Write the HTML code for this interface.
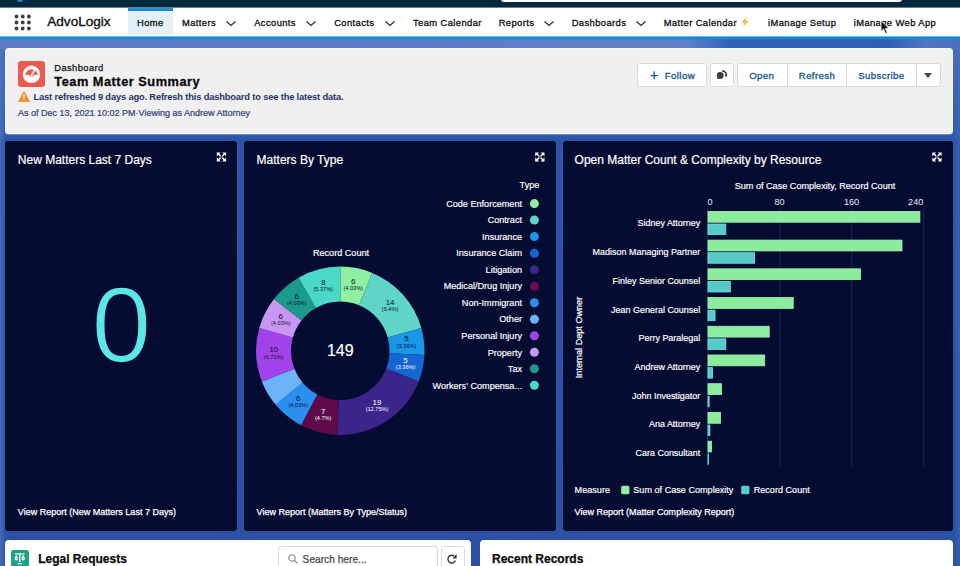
<!DOCTYPE html>
<html><head><meta charset="utf-8"><title>Team Matter Summary</title>
<style>
*{box-sizing:border-box;margin:0;padding:0}
html,body{width:960px;height:566px;overflow:hidden}
body{font-family:"Liberation Sans",Arial,sans-serif;background:#2c54a7;position:relative;color:#111}
.abs{position:absolute}
#bg{left:0;top:0;width:960px;height:566px;background:linear-gradient(90deg,rgba(90,125,200,0.55) 0,rgba(60,100,180,0) 6px,rgba(60,100,180,0) 953px,rgba(80,115,190,0.35) 960px),linear-gradient(180deg,#456cba 48px,#3059ad 134px,#2d55a8 140px,#2a51a4 566px)}
#top{left:0;top:0;width:960px;height:7.6px;background:#04283e}
#srch{left:501px;top:-6px;width:401px;height:8px;background:#fff;border-radius:3px}
#nav{left:0;top:0;width:960px;height:41px;background:linear-gradient(180deg,#04283e 0,#04283e 7.1px,#fff 8.1px,#fff 36px,#1689d3 36.8px,#1689d3 38.9px,rgba(40,120,200,0) 39.8px)}
.ni{position:absolute;top:17.4px;font-size:9.4px;letter-spacing:0.4px;line-height:12px;color:#111;white-space:nowrap;-webkit-text-stroke:0.3px #111}
.chev{position:absolute;top:20.5px;width:10px;height:5px}
#home{left:128px;top:8px;width:45px;height:27px;background:linear-gradient(180deg,rgba(22,137,211,0.6) 0,#1689d3 0.6px,#1689d3 2.6px,#e3f0f9 3.4px,#e3f0f9 26.3px,rgba(227,240,249,0) 26.9px)}
#hdr{left:5.4px;top:48px;width:947.7px;height:86px;background:#f0f0f0;border:1.5px solid #fbf8f2;border-radius:3.5px;box-shadow:0 0.6px 0 rgba(251,248,242,0.6)}
.btn{position:absolute;top:63px;height:23.5px;background:#fff;border:1px solid #ddd8d8;border-radius:3px;font-size:9.5px;letter-spacing:0.4px;color:#15538a;-webkit-text-stroke:0.3px #15538a;line-height:22px;text-align:center}
.bt{position:absolute;top:69.6px;font-size:9.6px;letter-spacing:0.4px;line-height:12px;color:#15538a;-webkit-text-stroke:0.3px #15538a;white-space:nowrap}
.panel{position:absolute;top:140.5px;height:390.5px;background:#050c31;border-radius:4px;box-shadow:inset 0 0 0 1px #040926}
.pt{position:absolute;top:153.2px;font-size:12px;line-height:15px;color:#fff;white-space:nowrap;-webkit-text-stroke:0.2px #fff}
.vr{position:absolute;top:506px;font-size:9.03px;line-height:12px;color:#fff;white-space:nowrap;-webkit-text-stroke:0.25px #fff}
.card{position:absolute;top:540.3px;height:30px;background:#fff;border-radius:4px}
svg{position:absolute;left:0;top:0;overflow:visible}
svg text{font-family:"Liberation Sans",Arial,sans-serif}
svg text[fill="#fff"]{stroke:#fff;stroke-width:0.18px}
</style></head><body>
<div id="bg" class="abs"></div>
<div class="abs" style="left:0;top:39px;width:960px;height:10px;background:linear-gradient(90deg,#5a7dc5 0,#5c7fc6 690px,#3261b6 730px,#3060b5 890px,#5076c0 925px,#4a70bc 960px)"></div>
<div id="nav" class="abs"></div>
<div id="srch" class="abs"></div>
<div class="abs" style="left:17px;top:-3px;width:6px;height:4.5px;border-radius:3px;background:#1c8fdc"></div>
<div id="home" class="abs"></div>
<svg class="abs" style="left:14px;top:14px" width="18" height="18" viewBox="0 0 18 18"><g fill="#3e3e3c">
<circle cx="2.5" cy="2.5" r="1.9"/><circle cx="8.7" cy="2.5" r="1.9"/><circle cx="14.9" cy="2.5" r="1.9"/>
<circle cx="2.5" cy="8.5" r="1.9"/><circle cx="8.7" cy="8.5" r="1.9"/><circle cx="14.9" cy="8.5" r="1.9"/>
<circle cx="2.5" cy="14.5" r="1.9"/><circle cx="8.7" cy="14.5" r="1.9"/><circle cx="14.9" cy="14.5" r="1.9"/></g></svg>
<div class="abs" style="left:47.3px;top:13px;font-size:13.55px;line-height:18px;color:#111;white-space:nowrap;-webkit-text-stroke:0.35px #111">AdvoLogix</div>
<div class="ni" style="left:137px">Home</div>
<div class="ni" style="left:182px">Matters</div>
<div class="ni" style="left:254.2px">Accounts</div>
<div class="ni" style="left:334.2px">Contacts</div>
<div class="ni" style="left:413px">Team Calendar</div>
<div class="ni" style="left:498.7px">Reports</div>
<div class="ni" style="left:571.7px">Dashboards</div>
<div class="ni" style="left:663.7px">Matter Calendar</div>
<div class="ni" style="left:768px">iManage Setup</div>
<div class="ni" style="left:853.7px">iManage Web App</div>
<svg class="chev" style="left:226px" viewBox="0 0 10 5"><path d="M0.5 0.4L5 4.4L9.5 0.4" fill="none" stroke="#2e2e2d" stroke-width="1.3"/></svg>
<svg class="chev" style="left:306px" viewBox="0 0 10 5"><path d="M0.5 0.4L5 4.4L9.5 0.4" fill="none" stroke="#2e2e2d" stroke-width="1.3"/></svg>
<svg class="chev" style="left:385px" viewBox="0 0 10 5"><path d="M0.5 0.4L5 4.4L9.5 0.4" fill="none" stroke="#2e2e2d" stroke-width="1.3"/></svg>
<svg class="chev" style="left:543.7px" viewBox="0 0 10 5"><path d="M0.5 0.4L5 4.4L9.5 0.4" fill="none" stroke="#2e2e2d" stroke-width="1.3"/></svg>
<svg class="chev" style="left:636px" viewBox="0 0 10 5"><path d="M0.5 0.4L5 4.4L9.5 0.4" fill="none" stroke="#2e2e2d" stroke-width="1.3"/></svg>
<svg class="abs" style="left:740.8px;top:17.3px" width="8" height="9.8" viewBox="0 0 8 11" preserveAspectRatio="none"><path d="M5.6 0L0.4 6.2H3.6L2 11L7.8 4.4H4.4Z" fill="#f7b836"/></svg>
<!-- cursor -->
<svg class="abs" style="left:880px;top:20px" width="10" height="15" viewBox="0 0 10 15"><path d="M1 0.5V11.5L3.6 9L5.6 13.6L7.4 12.8L5.4 8.4H9Z" fill="#111" stroke="#fff" stroke-width="0.8"/></svg>

<div id="hdr" class="abs"></div>
<div class="abs" style="left:18px;top:60.5px;width:27px;height:26.5px;background:#ea5a50;border-radius:3px;box-shadow:0 0 0 1px #f7f4ef"></div>
<svg class="abs" style="left:18px;top:60.5px" width="27" height="26.5" viewBox="0 0 27 26.5"><circle cx="13.5" cy="13.3" r="8.7" fill="#fff"/><path d="M7.3 14.4A6.2 6.2 0 0 1 19.7 14.4C18 13.2 16.4 13.6 15.4 14.8C14.4 16.2 12.4 16.2 11.5 14.8C10.6 13.6 9 13.2 7.3 14.4Z" fill="#ea5a50"/><path d="M13.3 14.6L16.2 9.6" stroke="#fff" stroke-width="1.7" stroke-linecap="round"/></svg>
<div class="abs" style="left:54.3px;top:62.2px;font-size:9.4px;letter-spacing:0.38px;line-height:12px;color:#111;-webkit-text-stroke:0.25px #111;white-space:nowrap">Dashboard</div>
<div class="abs" style="left:54.3px;top:72.9px;font-size:12.8px;letter-spacing:0.5px;line-height:17px;font-weight:bold;color:#0a0a0a;-webkit-text-stroke:0.3px #0a0a0a;white-space:nowrap">Team Matter Summary</div>
<svg class="abs" style="left:18px;top:91px" width="12" height="11" viewBox="0 0 12 11"><path d="M6 0.6L11.5 10.4H0.5Z" fill="#f58a2c" stroke="#f58a2c" stroke-width="0.8" stroke-linejoin="round"/><rect x="5.4" y="3.6" width="1.2" height="3.6" fill="#fff"/><rect x="5.4" y="8" width="1.2" height="1.2" fill="#fff"/></svg>
<div class="abs" style="left:33.5px;top:91px;font-size:9.3px;letter-spacing:-0.15px;line-height:12px;font-weight:bold;color:#22346c;white-space:nowrap">Last refreshed 9 days ago. Refresh this dashboard to see the latest data.</div>
<div class="abs" style="left:18px;top:106.6px;font-size:9px;line-height:12px;color:#2f4077;-webkit-text-stroke:0.2px #2f4077;white-space:nowrap">As of Dec 13, 2021 10:02 PM·Viewing as Andrew Attorney</div>

<div class="btn" style="left:637px;width:70px"><span style="position:absolute;left:12px;top:-0.4px;font-size:14px;letter-spacing:0">+</span><span style="position:absolute;left:26.7px;top:0.6px;font-size:9.7px">Follow</span></div>
<div class="btn" style="left:710.3px;width:23.7px"></div>
<svg class="abs" style="left:716px;top:70px" width="12" height="10" viewBox="0 0 12 10"><circle cx="4.2" cy="5.4" r="3.4" fill="#3f3d3b"/><path d="M1 9L1.6 6.4L4 8.4Z" fill="#3f3d3b"/><path d="M6.2 1.0A3.7 3.7 0 0 1 9.7 6.6" fill="none" stroke="#2f2d2b" stroke-width="1.5"/></svg>
<div class="btn" style="left:737px;width:203.5px"></div>
<div class="abs" style="left:786.5px;top:64px;width:1px;height:21.5px;background:#dcd9d8"></div>
<div class="abs" style="left:846px;top:64px;width:1px;height:21.5px;background:#dcd9d8"></div>
<div class="abs" style="left:916px;top:64px;width:1px;height:21.5px;background:#dcd9d8"></div>
<div class="bt" style="left:749.2px">Open</div>
<div class="bt" style="left:798.8px">Refresh</div>
<div class="bt" style="left:858.3px">Subscribe</div>
<svg class="abs" style="left:924.3px;top:72.5px" width="8" height="5" viewBox="0 0 8 5"><path d="M0 0H8L4 5Z" fill="#4a4846"/></svg>

<div class="panel" style="left:5.2px;width:232.3px"></div>
<div class="panel" style="left:244px;width:311.5px"></div>
<div class="panel" style="left:562.5px;width:390px"></div>
<div class="pt" style="left:17.8px">New Matters Last 7 Days</div>
<div class="pt" style="left:256.6px">Matters By Type</div>
<div class="pt" style="left:574.6px">Open Matter Count &amp; Complexity by Resource</div>
<div class="vr" style="left:17.8px">View Report (New Matters Last 7 Days)</div>
<div class="vr" style="left:256.6px">View Report (Matters By Type/Status)</div>
<div class="vr" style="left:574.6px">View Report (Matter Complexity Report)</div>
<div class="abs" id="zero" style="left:61.5px;top:264.5px;width:120px;text-align:center;font-size:107.5px;line-height:120px;color:#5ce6e6;-webkit-text-stroke:1.6px #050c31">0</div>

<svg class="abs" width="960" height="566" viewBox="0 0 960 566">
<g transform="translate(216.8 152.4)"><path d="M0 0H3.9L0 3.9ZM9.3 0V3.9L5.4 0ZM0 9.1V5.2L3.9 9.1ZM9.3 9.1H5.4L9.3 5.2Z" fill="#fff"/><path d="M1.4 1.4L3.7 3.65M7.9 1.4L5.6 3.65M1.4 7.7L3.7 5.45M7.9 7.7L5.6 5.45" stroke="#fff" stroke-width="1.5"/><path d="M3.5 3.45L5.8 5.65M5.8 3.45L3.5 5.65" stroke="#fff" stroke-width="1.3" opacity="0.4"/></g>
<g transform="translate(535.2 152.4)"><path d="M0 0H3.9L0 3.9ZM9.3 0V3.9L5.4 0ZM0 9.1V5.2L3.9 9.1ZM9.3 9.1H5.4L9.3 5.2Z" fill="#fff"/><path d="M1.4 1.4L3.7 3.65M7.9 1.4L5.6 3.65M1.4 7.7L3.7 5.45M7.9 7.7L5.6 5.45" stroke="#fff" stroke-width="1.5"/><path d="M3.5 3.45L5.8 5.65M5.8 3.45L3.5 5.65" stroke="#fff" stroke-width="1.3" opacity="0.4"/></g>
<g transform="translate(932.3 152.4)"><path d="M0 0H3.9L0 3.9ZM9.3 0V3.9L5.4 0ZM0 9.1V5.2L3.9 9.1ZM9.3 9.1H5.4L9.3 5.2Z" fill="#fff"/><path d="M1.4 1.4L3.7 3.65M7.9 1.4L5.6 3.65M1.4 7.7L3.7 5.45M7.9 7.7L5.6 5.45" stroke="#fff" stroke-width="1.5"/><path d="M3.5 3.45L5.8 5.65M5.8 3.45L3.5 5.65" stroke="#fff" stroke-width="1.3" opacity="0.4"/></g>
<text x="539.3" y="188" text-anchor="end" font-size="9.1" fill="#fff">Type</text>
<text x="522" y="206.8" text-anchor="end" font-size="9.1" fill="#fff">Code Enforcement</text><circle cx="534.4" cy="203.6" r="4.5" fill="#8ff0a2"/>
<text x="522" y="223.3" text-anchor="end" font-size="9.1" fill="#fff">Contract</text><circle cx="534.4" cy="220.1" r="4.5" fill="#5fd5c5"/>
<text x="522" y="239.8" text-anchor="end" font-size="9.1" fill="#fff">Insurance</text><circle cx="534.4" cy="236.6" r="4.5" fill="#1b97e8"/>
<text x="522" y="256.4" text-anchor="end" font-size="9.1" fill="#fff">Insurance Claim</text><circle cx="534.4" cy="253.2" r="4.5" fill="#1565d3"/>
<text x="522" y="272.9" text-anchor="end" font-size="9.1" fill="#fff">Litigation</text><circle cx="534.4" cy="269.7" r="4.5" fill="#3b258b"/>
<text x="522" y="289.4" text-anchor="end" font-size="9.1" fill="#fff">Medical/Drug Injury</text><circle cx="534.4" cy="286.2" r="4.5" fill="#6a0c50"/>
<text x="522" y="305.9" text-anchor="end" font-size="9.1" fill="#fff">Non-Immigrant</text><circle cx="534.4" cy="302.7" r="4.5" fill="#2a8ff0"/>
<text x="522" y="322.4" text-anchor="end" font-size="9.1" fill="#fff">Other</text><circle cx="534.4" cy="319.2" r="4.5" fill="#6cb3f7"/>
<text x="522" y="339.0" text-anchor="end" font-size="9.1" fill="#fff">Personal Injury</text><circle cx="534.4" cy="335.8" r="4.5" fill="#a142ea"/>
<text x="522" y="355.5" text-anchor="end" font-size="9.1" fill="#fff">Property</text><circle cx="534.4" cy="352.3" r="4.5" fill="#c997f3"/>
<text x="522" y="372.0" text-anchor="end" font-size="9.1" fill="#fff">Tax</text><circle cx="534.4" cy="368.8" r="4.5" fill="#1b9b8b"/>
<text x="522" y="388.5" text-anchor="end" font-size="9.1" fill="#fff">Workers' Compensa...</text><circle cx="534.4" cy="385.3" r="4.5" fill="#4ad9c9"/>
<text x="341" y="256.2" text-anchor="middle" font-size="9.1" fill="#fff">Record Count</text>
<path d="M340.30 266.60A84.2 84.2 0 0 1 372.21 272.88L358.98 305.18A49.3 49.3 0 0 0 340.30 301.50Z" fill="#8ff0a2"/>
<text x="353.2" y="283.5" text-anchor="middle" font-size="8" fill="#0b1030">6</text>
<text x="353.2" y="290.0" text-anchor="middle" font-size="5.6" fill="#0b1030">(4.03%)</text>
<path d="M372.21 272.88A84.2 84.2 0 0 1 421.33 327.91L387.74 337.40A49.3 49.3 0 0 0 358.98 305.18Z" fill="#5fd5c5"/>
<text x="390.1" y="304.6" text-anchor="middle" font-size="8" fill="#0b1030">14</text>
<text x="390.1" y="311.1" text-anchor="middle" font-size="5.6" fill="#0b1030">(9.4%)</text>
<path d="M421.33 327.91A84.2 84.2 0 0 1 424.40 354.89L389.54 353.19A49.3 49.3 0 0 0 387.74 337.40Z" fill="#1b97e8"/>
<text x="406.6" y="341.4" text-anchor="middle" font-size="8" fill="#0b1030">5</text>
<text x="406.6" y="347.9" text-anchor="middle" font-size="5.6" fill="#0b1030">(3.36%)</text>
<path d="M424.40 354.89A84.2 84.2 0 0 1 418.73 381.44L386.22 368.74A49.3 49.3 0 0 0 389.54 353.19Z" fill="#1565d3"/>
<text x="405.6" y="362.9" text-anchor="middle" font-size="8" fill="#ffffff">5</text>
<text x="405.6" y="369.4" text-anchor="middle" font-size="5.6" fill="#ffffff">(3.36%)</text>
<path d="M418.73 381.44A84.2 84.2 0 0 1 337.57 434.96L338.70 400.07A49.3 49.3 0 0 0 386.22 368.74Z" fill="#3b258b"/>
<text x="377.0" y="404.7" text-anchor="middle" font-size="8" fill="#ffffff">19</text>
<text x="377.0" y="411.2" text-anchor="middle" font-size="5.6" fill="#ffffff">(12.75%)</text>
<path d="M337.57 434.96A84.2 84.2 0 0 1 300.98 425.26L317.28 394.40A49.3 49.3 0 0 0 338.70 400.07Z" fill="#5e0a4a"/>
<text x="323.2" y="413.5" text-anchor="middle" font-size="8" fill="#ffffff">7</text>
<text x="323.2" y="420.0" text-anchor="middle" font-size="5.6" fill="#ffffff">(4.7%)</text>
<path d="M300.98 425.26A84.2 84.2 0 0 1 275.70 404.81L302.48 382.42A49.3 49.3 0 0 0 317.28 394.40Z" fill="#2a8ff0"/>
<text x="298.3" y="400.9" text-anchor="middle" font-size="8" fill="#0b1030">6</text>
<text x="298.3" y="407.4" text-anchor="middle" font-size="5.6" fill="#0b1030">(4.03%)</text>
<path d="M275.70 404.81A84.2 84.2 0 0 1 261.87 381.44L294.38 368.74A49.3 49.3 0 0 0 302.48 382.42Z" fill="#6cb3f7"/>
<path d="M261.87 381.44A84.2 84.2 0 0 1 259.27 327.91L292.86 337.40A49.3 49.3 0 0 0 294.38 368.74Z" fill="#a142ea"/>
<text x="273.6" y="352.2" text-anchor="middle" font-size="8" fill="#0b1030">10</text>
<text x="273.6" y="358.7" text-anchor="middle" font-size="5.6" fill="#0b1030">(6.71%)</text>
<path d="M259.27 327.91A84.2 84.2 0 0 1 273.99 298.91L301.47 320.42A49.3 49.3 0 0 0 292.86 337.40Z" fill="#c997f3"/>
<text x="280.8" y="318.8" text-anchor="middle" font-size="8" fill="#0b1030">6</text>
<text x="280.8" y="325.3" text-anchor="middle" font-size="5.6" fill="#0b1030">(4.03%)</text>
<path d="M273.99 298.91A84.2 84.2 0 0 1 298.59 277.65L315.88 307.97A49.3 49.3 0 0 0 301.47 320.42Z" fill="#1b9b8b"/>
<text x="296.7" y="298.5" text-anchor="middle" font-size="8" fill="#0b1030">6</text>
<text x="296.7" y="305.0" text-anchor="middle" font-size="5.6" fill="#0b1030">(4.03%)</text>
<path d="M298.59 277.65A84.2 84.2 0 0 1 340.30 266.60L340.30 301.50A49.3 49.3 0 0 0 315.88 307.97Z" fill="#4ad9c9"/>
<text x="323.2" y="284.5" text-anchor="middle" font-size="8" fill="#0b1030">8</text>
<text x="323.2" y="291.0" text-anchor="middle" font-size="5.6" fill="#0b1030">(5.37%)</text>
<text x="340.3" y="356" text-anchor="middle" font-size="16" fill="#fff">149</text>

<text x="815" y="189.2" text-anchor="middle" font-size="9.1" fill="#fff">Sum of Case Complexity, Record Count</text>
<text x="707.5" y="205.2" font-size="9.1" fill="#e8ecf8">0</text>
<text x="779.5" y="205.2" text-anchor="middle" font-size="9.1" fill="#e8ecf8">80</text>
<text x="851.6" y="205.2" text-anchor="middle" font-size="9.1" fill="#e8ecf8">160</text>
<text x="923.3" y="205.2" text-anchor="end" font-size="9.1" fill="#e8ecf8">240</text>
<rect x="707.0" y="208" width="1" height="258.5" fill="#16275a"/>
<rect x="779.3" y="208" width="1" height="258.5" fill="#16275a"/>
<rect x="851.2" y="208" width="1" height="258.5" fill="#16275a"/>
<rect x="923.2" y="208" width="1" height="258.5" fill="#16275a"/>
<rect x="708.0" y="211.40" width="211.9" height="10.8" fill="#8aec9c" stroke="#a6f6b4" stroke-width="0.8"/>
<rect x="708.0" y="224.00" width="17.8" height="10.5" fill="#55cac6" stroke="#76eae4" stroke-width="0.8"/>
<text x="700.3" y="226.4" text-anchor="end" font-size="8.97" fill="#fff">Sidney Attorney</text>
<rect x="708.0" y="240.12" width="194.0" height="10.8" fill="#8aec9c" stroke="#a6f6b4" stroke-width="0.8"/>
<rect x="708.0" y="252.72" width="46.6" height="10.5" fill="#55cac6" stroke="#76eae4" stroke-width="0.8"/>
<text x="700.3" y="255.1" text-anchor="end" font-size="8.97" fill="#fff">Madison Managing Partner</text>
<rect x="708.0" y="268.84" width="152.5" height="10.8" fill="#8aec9c" stroke="#a6f6b4" stroke-width="0.8"/>
<rect x="708.0" y="281.44" width="22.3" height="10.5" fill="#55cac6" stroke="#76eae4" stroke-width="0.8"/>
<text x="700.3" y="283.8" text-anchor="end" font-size="8.97" fill="#fff">Finley Senior Counsel</text>
<rect x="708.0" y="297.56" width="85.2" height="10.8" fill="#8aec9c" stroke="#a6f6b4" stroke-width="0.8"/>
<rect x="708.0" y="310.16" width="7.0" height="10.5" fill="#55cac6" stroke="#76eae4" stroke-width="0.8"/>
<text x="700.3" y="312.6" text-anchor="end" font-size="8.97" fill="#fff">Jean General Counsel</text>
<rect x="708.0" y="326.28" width="61.2" height="10.8" fill="#8aec9c" stroke="#a6f6b4" stroke-width="0.8"/>
<rect x="708.0" y="338.88" width="17.8" height="10.5" fill="#55cac6" stroke="#76eae4" stroke-width="0.8"/>
<text x="700.3" y="341.3" text-anchor="end" font-size="8.97" fill="#fff">Perry Paralegal</text>
<rect x="708.0" y="355.00" width="56.7" height="10.8" fill="#8aec9c" stroke="#a6f6b4" stroke-width="0.8"/>
<rect x="708.0" y="367.60" width="4.5" height="10.5" fill="#55cac6" stroke="#76eae4" stroke-width="0.8"/>
<text x="700.3" y="370.0" text-anchor="end" font-size="8.97" fill="#fff">Andrew Attorney</text>
<rect x="708.0" y="383.72" width="13.5" height="10.8" fill="#8aec9c" stroke="#a6f6b4" stroke-width="0.8"/>
<rect x="708.0" y="396.32" width="1.1" height="10.5" fill="#55cac6" stroke="#76eae4" stroke-width="0.8"/>
<text x="700.3" y="398.7" text-anchor="end" font-size="8.97" fill="#fff">John Investigator</text>
<rect x="708.0" y="412.44" width="12.5" height="10.8" fill="#8aec9c" stroke="#a6f6b4" stroke-width="0.8"/>
<rect x="708.0" y="425.04" width="1.9" height="10.5" fill="#55cac6" stroke="#76eae4" stroke-width="0.8"/>
<text x="700.3" y="427.4" text-anchor="end" font-size="8.97" fill="#fff">Ana Attorney</text>
<rect x="708.0" y="441.16" width="3.5" height="10.8" fill="#8aec9c" stroke="#a6f6b4" stroke-width="0.8"/>
<rect x="708.0" y="453.76" width="0.5" height="10.5" fill="#55cac6" stroke="#76eae4" stroke-width="0.8"/>
<text x="700.3" y="456.2" text-anchor="end" font-size="8.97" fill="#fff">Cara Consultant</text>
<text transform="translate(582 337.5) rotate(-90)" text-anchor="middle" font-size="9.1" fill="#fff">Internal Dept Owner</text>
<text x="574.6" y="492.8" font-size="9.1" fill="#fff">Measure</text>
<rect x="621.2" y="485.8" width="8.2" height="8.4" rx="1.5" fill="#8ff0a2"/>
<text x="633.3" y="492.8" font-size="9.1" fill="#fff">Sum of Case Complexity</text>
<rect x="741.2" y="485.8" width="8.2" height="8.4" rx="1.5" fill="#56cfc9"/>
<text x="753.7" y="492.8" font-size="9.1" fill="#fff">Record Count</text>
</svg>

<div class="card" style="left:5px;width:465.5px"></div>
<div class="card" style="left:479.5px;width:473.5px"></div>
<div class="abs" style="left:11.4px;top:549.7px;width:17.5px;height:17.5px;background:#19a387;border-radius:2.5px"></div>
<svg class="abs" style="left:11.4px;top:549.7px" width="17.5" height="17.5" viewBox="0 0 17.5 17.5"><g stroke="#fff" fill="none"><path d="M3.8 3.9H13.7" stroke-width="1.1"/><path d="M8.75 3.6V12" stroke-width="1.5"/><path d="M6.6 13.6H10.9" stroke-width="1.3"/></g><g fill="#fff"><path d="M5.3 4.6C6.2 6.6 6.9 7.8 6.9 8.9A1.6 1.6 0 0 1 3.7 8.9C3.7 7.8 4.4 6.6 5.3 4.6Z"/><path d="M12.2 4.6C13.1 6.6 13.8 7.8 13.8 8.9A1.6 1.6 0 0 1 10.6 8.9C10.6 7.8 11.3 6.6 12.2 4.6Z"/></g><g fill="#19a387"><circle cx="5.3" cy="8.6" r="0.6"/><circle cx="12.2" cy="8.6" r="0.6"/></g></svg>
<div class="abs" style="left:38.2px;top:551.7px;font-size:12px;line-height:15px;font-weight:bold;color:#0a0a0a;-webkit-text-stroke:0.25px #0a0a0a;white-space:nowrap">Legal Requests</div>
<div class="abs" style="left:278px;top:546.3px;width:159.5px;height:26px;background:#fff;border:1px solid #dcd9d8;border-radius:3px"></div>
<svg class="abs" style="left:287.8px;top:553.8px" width="10" height="10" viewBox="0 0 10 10"><circle cx="3.9" cy="3.9" r="3.2" fill="none" stroke="#8a8886" stroke-width="1.1"/><path d="M6.3 6.3L9.4 9.4" stroke="#8a8886" stroke-width="1.3"/></svg>
<div class="abs" style="left:302.6px;top:553.5px;font-size:10.2px;line-height:12px;color:#4a4a4a;-webkit-text-stroke:0.25px #4a4a4a;white-space:nowrap">Search here...</div>
<div class="abs" style="left:440.5px;top:546.3px;width:24px;height:26px;background:#fff;border:1px solid #dcd9d8;border-radius:3px"></div>
<svg class="abs" style="left:447.3px;top:554px" width="10" height="10" viewBox="0 0 10 10"><path d="M8.4 6.6A3.9 3.9 0 1 1 7.4 2.2" fill="none" stroke="#3a3836" stroke-width="1.4"/><path d="M9.6 0.2V4.4H5.4Z" fill="#3a3836"/></svg>
<div class="abs" style="left:492px;top:551.7px;font-size:12px;line-height:15px;font-weight:bold;color:#0a0a0a;-webkit-text-stroke:0.25px #0a0a0a;white-space:nowrap">Recent Records</div>
</body></html>
